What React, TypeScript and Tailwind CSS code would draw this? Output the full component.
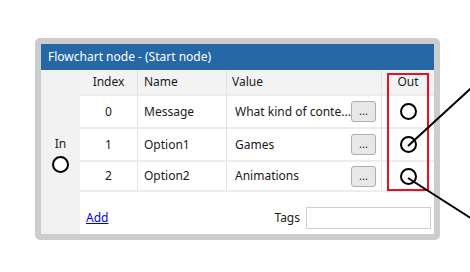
import React from 'react';

const font = { fontFamily: '"Noto Sans", "Open Sans", sans-serif' };

const rows = [
  { index: 0, name: 'Message', value: 'What kind of conte...', h: 'h-[33px]' },
  { index: 1, name: 'Option1', value: 'Games', h: 'h-[33px]' },
  { index: 2, name: 'Option2', value: 'Animations', h: 'h-[30px]' },
];

const Port = () => (
  <div className="w-[17px] h-[17px] rounded-full border-2 border-black bg-white" />
);

const App: React.FC = () => {
  return (
    <div
      className="relative w-[470px] h-[272px] bg-white overflow-hidden pt-[38px] pl-[35px] text-[12px] text-[#1a1a1a]"
      style={font}
    >
      <div className="w-[405px] h-[202px] border-[6px] border-[#cdcdcd] rounded-[5px] flex flex-col bg-white">
        <div className="h-[26px] shrink-0 bg-[#2667a6] text-white text-[12px] flex items-center px-[7px]">
          Flowchart node - (Start node)
        </div>

        <div className="flex flex-1">
          {/* input port */}
          <div className="w-[39px] bg-[#f2f2f2] flex flex-col items-center justify-center gap-[3px] pt-[3px]">
            <span>In</span>
            <Port />
          </div>

          <div className="flex-1 flex flex-col">
            <div className="grid grid-cols-[58px_89px_155px_1fr] h-[26px] bg-[#f3f3f3] border-b-2 border-[#ebebeb]">
              <div className="flex items-center justify-center border-r border-[#e2e2e2]">Index</div>
              <div className="flex items-center px-[6px] border-r border-[#e2e2e2]">Name</div>
              <div className="flex items-center px-[5px] border-r border-[#e2e2e2]">Value</div>
              <div className="flex items-center justify-center">Out</div>
            </div>

            {rows.map((r) => (
              <div
                key={r.index}
                className={`grid grid-cols-[58px_89px_155px_1fr] ${r.h} border-b-2 border-[#ededed]`}
              >
                <div className="flex items-center justify-center border-r border-[#e2e2e2]">{r.index}</div>
                <div className="flex items-center px-[6px] border-r border-[#e2e2e2]">{r.name}</div>
                <div className="flex items-center pl-[8px] pr-[5px] border-r border-[#e2e2e2]">
                  <span className="flex-1 whitespace-nowrap overflow-hidden">{r.value}</span>
                  <button className="w-[25px] h-[21px] shrink-0 bg-[#e8e8e8] border border-[#adadad] rounded-[3px] text-[11px] leading-none flex items-end justify-center pb-[5px]">
                    ...
                  </button>
                </div>
                <div className="flex items-center justify-center">
                  <Port />
                </div>
              </div>
            ))}

            <div className="flex items-center pt-[15px] pb-[3px] pl-[6px] pr-[3px]">
              <a href="#" className="text-[#0000ee] underline">Add</a>
              <span className="ml-auto mr-[6px]">Tags</span>
              <input className="w-[125px] h-[22px] border border-[#cfcfcf] outline-none bg-white" />
            </div>
          </div>
        </div>
      </div>

      {/* highlight box around the output ports */}
      <div className="absolute left-[387px] top-[73px] w-[42px] h-[118px] border-2 border-[#e81123] pointer-events-none" />

      {/* connection wires */}
      <svg className="absolute left-0 top-0 pointer-events-none" width="470" height="272">
        <line x1="408" y1="146" x2="480" y2="80" stroke="black" strokeWidth="2" />
        <line x1="408" y1="178" x2="480" y2="224" stroke="black" strokeWidth="2" />
      </svg>
    </div>
  );
};

export default App;
